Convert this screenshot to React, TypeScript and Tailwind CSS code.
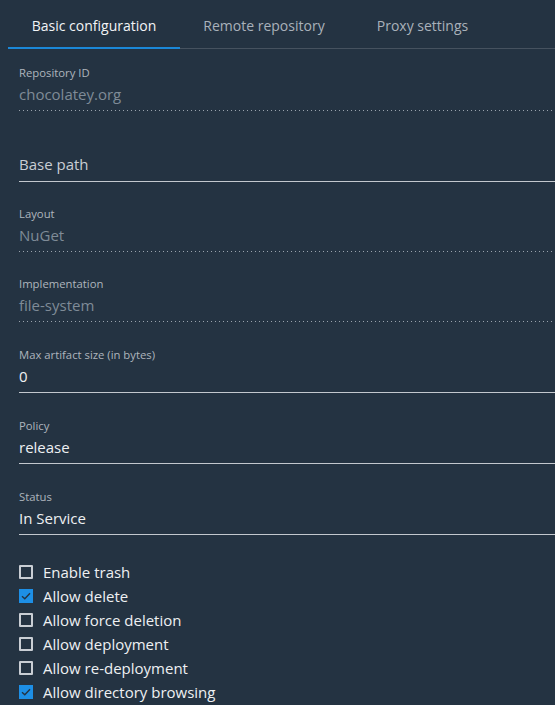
const fields = [
  { label: 'Repository ID', value: 'chocolatey.org', disabled: true, h: 'h-[71px]' },
  { label: '', value: 'Base path', disabled: false, placeholder: true, h: 'h-[70px]' },
  { label: 'Layout', value: 'NuGet', disabled: true, h: 'h-[70px]' },
  { label: 'Implementation', value: 'file-system', disabled: true, h: 'h-[71px]' },
  { label: 'Max artifact size (in bytes)', value: '0', disabled: false, h: 'h-[71px]' },
  { label: 'Policy', value: 'release', disabled: false, h: 'h-[71px]' },
  { label: 'Status', value: 'In Service', disabled: false, h: 'h-[72px]' },
];

const options = [
  { label: 'Enable trash', checked: false },
  { label: 'Allow delete', checked: true },
  { label: 'Allow force deletion', checked: false },
  { label: 'Allow deployment', checked: false },
  { label: 'Allow re-deployment', checked: false },
  { label: 'Allow directory browsing', checked: true },
];

type FieldProps = { label: string; value: string; disabled: boolean; placeholder?: boolean; h: string };

function Field({ label, value, disabled, placeholder, h }: FieldProps) {
  if (placeholder) {
    return (
      <div className={`${h} pt-[18px]`}>
        <div className="h-[29px] border-b border-[#c3c8ce] text-[15px] leading-[22px] text-[#c9ced4]">{value}</div>
      </div>
    );
  }
  return (
    <div className={h}>
      <div className="pt-[1px] text-[11.3px] leading-[16px] text-[#aeb5bd]">{label}</div>
      <div className={`mt-[2px] h-[27px] text-[15px] leading-[22px] ${disabled ? 'text-[#7f8b97]' : 'text-[#eef0f2]'}`}>
        {value}
      </div>
      {disabled ? (
        <div className="h-[1px] bg-[linear-gradient(to_right,#9aa3ad_1px,transparent_1px)] bg-[length:4px_1px]" />
      ) : (
        <div className="h-[1px] bg-[#c3c8ce]" />
      )}
    </div>
  );
}

export default function App() {
  return (
    <div className="h-[705px] w-[555px] overflow-hidden bg-[#243342]" style={{ fontFamily: '"Open Sans", sans-serif' }}>
      <div className="ml-[8px] flex h-[49px] border-b border-[#46525f] text-[14px]">
        <div className="relative flex w-[172px] items-center justify-center pt-[3px] text-[#f2f4f6]">
          Basic configuration
          <div className="absolute bottom-[-1px] left-0 h-[2px] w-full bg-[#1b88d8]" />
        </div>
        <div className="flex w-[168px] items-center justify-center pt-[3px] text-[#a9b1ba]">Remote repository</div>
        <div className="flex w-[149px] items-center justify-center pt-[3px] text-[#a9b1ba]">Proxy settings</div>
      </div>

      <div className="pl-[19px] pt-[15px]">
        {fields.map((f) => (
          <Field key={f.value} {...f} />
        ))}

        <div className="flex flex-col">
          {options.map((o) => (
            <label key={o.label} className="flex h-[24px] items-center gap-[10px] text-[15px] text-[#eef0f2]">
              {o.checked ? (
                <span className="flex h-[14px] w-[14px] items-center justify-center bg-[#1d8fe6]">
                  <svg width="10" height="8" viewBox="0 0 10 8" fill="none">
                    <path d="M1 4.2L3.8 6.8L9 1.2" stroke="#243342" strokeWidth="1.4" />
                  </svg>
                </span>
              ) : (
                <span className="h-[14px] w-[14px] rounded-[1px] border-2 border-[#c9ced4]" />
              )}
              {o.label}
            </label>
          ))}
        </div>
      </div>
    </div>
  );
}
